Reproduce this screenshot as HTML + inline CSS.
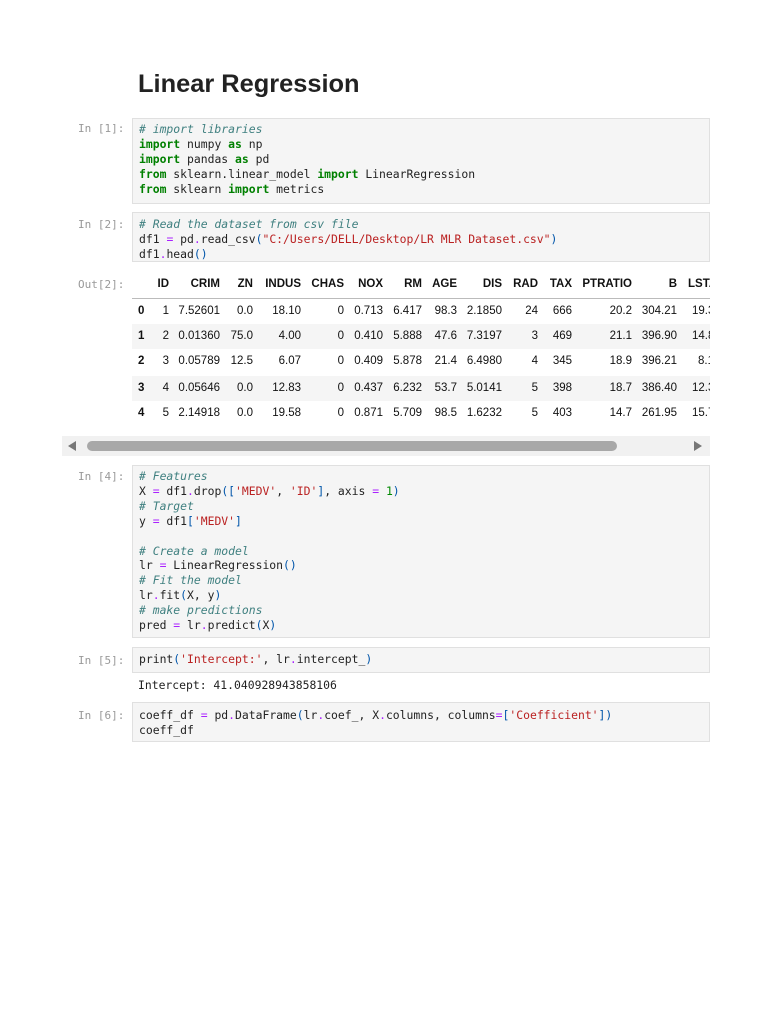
<!DOCTYPE html>
<html><head><meta charset="utf-8"><style>
*{margin:0;padding:0;box-sizing:border-box}
body{width:768px;height:1024px;background:#fff;position:relative;overflow:hidden;font-family:"DejaVu Sans Mono","Liberation Mono",monospace;}
.t{position:absolute;left:138px;top:70px;font-family:"Liberation Sans",sans-serif;font-size:25.4px;font-weight:bold;color:#222}
.p{position:absolute;left:78px;font-size:11px;color:#999;white-space:pre}
.c{position:absolute;left:132px;width:578px;background:#f5f5f5;border:1px solid #e0e0e0}
pre{position:absolute;left:139px;font-family:"DejaVu Sans Mono","Liberation Mono",monospace;font-size:11.4px;line-height:14.9px;color:#222}
.cm{color:#408080;font-style:italic}.k{color:#008000;font-weight:bold}.s{color:#ba2121}.o{color:#aa22ff}.b{color:#0055aa}.n{color:#080}
.tb{position:absolute;font-family:"Liberation Sans",sans-serif;font-size:11.5px;color:#111;white-space:nowrap}
.h{font-weight:bold}
.r{position:absolute;left:132px;width:578px;height:25px}
</style></head><body>
<div class="t">Linear Regression</div>

<div class="p" style="top:122px">In [1]:</div>
<div class="c" style="top:118px;height:86px"></div>
<pre style="top:122px"><span class="cm"># import libraries</span>
<span class="k">import</span> numpy <span class="k">as</span> np
<span class="k">import</span> pandas <span class="k">as</span> pd
<span class="k">from</span> sklearn.linear_model <span class="k">import</span> LinearRegression
<span class="k">from</span> sklearn <span class="k">import</span> metrics</pre>

<div class="p" style="top:218px">In [2]:</div>
<div class="c" style="top:212px;height:50px"></div>
<pre style="top:217px"><span class="cm"># Read the dataset from csv file</span>
df1 <span class="o">=</span> pd<span class="o">.</span>read_csv<span class="b">(</span><span class="s">"C:/Users/DELL/Desktop/LR MLR Dataset.csv"</span><span class="b">)</span>
df1<span class="o">.</span>head<span class="b">()</span></pre>

<div class="p" style="top:278px">Out[2]:</div>
<div class="r" style="top:324px;background:#f5f5f5"></div>
<div class="r" style="top:376px;background:#f5f5f5"></div>
<div style="position:absolute;left:132px;top:298px;width:578px;height:1px;background:#bbb"></div>
<div id="tbl"></div>
<div style="position:absolute;left:62px;top:436px;width:648px;height:20px;background:#f1f1f1"></div>
<div style="position:absolute;left:68px;top:441px;width:0;height:0;border-top:5px solid transparent;border-bottom:5px solid transparent;border-right:8px solid #777"></div>
<div style="position:absolute;left:694px;top:441px;width:0;height:0;border-top:5px solid transparent;border-bottom:5px solid transparent;border-left:8px solid #777"></div>
<div style="position:absolute;left:87px;top:441px;width:530px;height:10px;border-radius:5px;background:#a8a8a8"></div>

<div class="p" style="top:470px">In [4]:</div>
<div class="c" style="top:465px;height:173px"></div>
<pre style="top:469px"><span class="cm"># Features</span>
X <span class="o">=</span> df1<span class="o">.</span>drop<span class="b">([</span><span class="s">'MEDV'</span>, <span class="s">'ID'</span><span class="b">]</span>, axis <span class="o">=</span> <span class="n">1</span><span class="b">)</span>
<span class="cm"># Target</span>
y <span class="o">=</span> df1<span class="b">[</span><span class="s">'MEDV'</span><span class="b">]</span>

<span class="cm"># Create a model</span>
lr <span class="o">=</span> LinearRegression<span class="b">()</span>
<span class="cm"># Fit the model</span>
lr<span class="o">.</span>fit<span class="b">(</span>X, y<span class="b">)</span>
<span class="cm"># make predictions</span>
pred <span class="o">=</span> lr<span class="o">.</span>predict<span class="b">(</span>X<span class="b">)</span></pre>

<div class="p" style="top:654px">In [5]:</div>
<div class="c" style="top:647px;height:26px"></div>
<pre style="top:652px">print<span class="b">(</span><span class="s">'Intercept:'</span>, lr<span class="o">.</span>intercept_<span class="b">)</span></pre>
<pre style="top:678px;left:138px">Intercept: 41.040928943858106</pre>

<div class="p" style="top:709px">In [6]:</div>
<div class="c" style="top:702px;height:40px"></div>
<pre style="top:708px">coeff_df <span class="o">=</span> pd<span class="o">.</span>DataFrame<span class="b">(</span>lr<span class="o">.</span>coef_, X<span class="o">.</span>columns, columns<span class="o">=</span><span class="b">[</span><span class="s">'Coefficient'</span><span class="b">])</span>
coeff_df</pre>

<script>
var R=[169,220,253,301,344,383,422,457,502,538,572,632,677];
var H=["ID","CRIM","ZN","INDUS","CHAS","NOX","RM","AGE","DIS","RAD","TAX","PTRATIO","B"];
var D=[["1","7.52601","0.0","18.10","0","0.713","6.417","98.3","2.1850","24","666","20.2","304.21","19.3"],
["2","0.01360","75.0","4.00","0","0.410","5.888","47.6","7.3197","3","469","21.1","396.90","14.8"],
["3","0.05789","12.5","6.07","0","0.409","5.878","21.4","6.4980","4","345","18.9","396.21","8.1"],
["4","0.05646","0.0","12.83","0","0.437","6.232","53.7","5.0141","5","398","18.7","386.40","12.3"],
["5","2.14918","0.0","19.58","0","0.871","5.709","98.5","1.6232","5","403","14.7","261.95","15.7"]];
var ys=[305,330,355,382,407],h="";
function cell(t,r,y,b){return '<div class="tb'+(b?' h':'')+'" style="top:'+y+'px;right:'+(768-r)+'px">'+t+'</div>';}
for(var i=0;i<H.length;i++)h+=cell(H[i],R[i],278,1);
h+='<div style="position:absolute;left:688px;top:278px;width:22px;overflow:hidden" class="tb h">LSTAT</div>';
for(var j=0;j<5;j++){h+='<div class="tb h" style="top:'+ys[j]+'px;left:138px">'+j+'</div>';
for(var i=0;i<13;i++)h+=cell(D[j][i],R[i],ys[j],0);
h+='<div class="tb" style="top:'+ys[j]+'px;left:'+(j==2?698:692)+'px;width:'+(j==2?12:18)+'px;overflow:hidden">'+D[j][13]+'</div>';}
document.getElementById('tbl').innerHTML=h;
</script>
</body></html>
